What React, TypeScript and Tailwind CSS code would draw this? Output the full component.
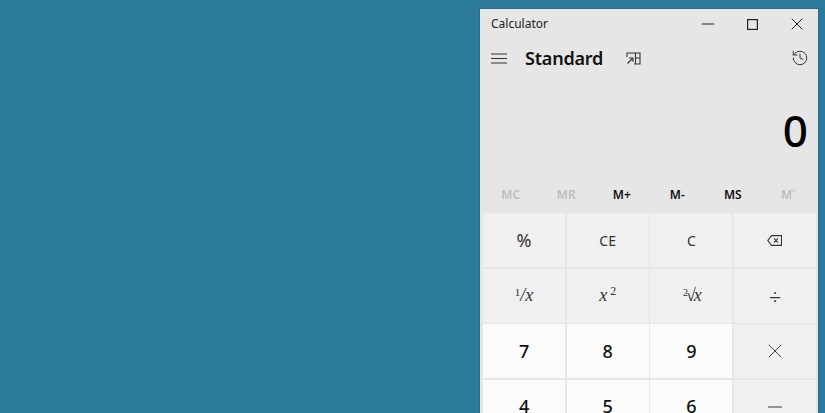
import { History, Minus, X } from "lucide-react";

const FONT = "font-['Noto_Sans','Open_Sans',sans-serif]";

function MenuIcon() {
  return (
    <svg width="16" height="11" viewBox="0 0 16 11" fill="none" stroke="#333" strokeWidth="1.2">
      <path d="M0 1h16M0 5.5h16M0 10h16" />
    </svg>
  );
}

function MaximizeIcon() {
  return (
    <svg width="11" height="11" viewBox="0 0 11 11" fill="none" stroke="#222" strokeWidth="1.2">
      <rect x="0.6" y="0.6" width="9.8" height="9.8" />
    </svg>
  );
}

function KeepOnTopIcon() {
  return (
    <svg width="15" height="13" viewBox="0 0 15 13" fill="none" stroke="#333" strokeWidth="1.1">
      <path d="M1 5V1h13v11H8" />
      <path d="M9.5 1v11M9.5 6H14" />
      <path d="M1.5 11.5 6.5 6.5M3 6h4v4" />
    </svg>
  );
}

function BackspaceIcon() {
  return (
    <svg width="15" height="11" viewBox="0 0 15 11" fill="none" stroke="#333" strokeWidth="1.1">
      <path d="M4.5.6h10v9.8h-10L.8 5.5z" />
      <path d="M7 3.4 11 7.6M11 3.4 7 7.6" />
    </svg>
  );
}

function Key({ children, light }: { children: React.ReactNode; light?: boolean }) {
  return (
    <div className={`flex h-[54px] items-center justify-center ${light ? "bg-[#fbfbfb]" : "bg-[#f0f0f0]"}`}>
      {children}
    </div>
  );
}

function Digit({ value }: { value: string }) {
  return (
    <Key light>
      <span className="text-[18px] font-medium text-[#111]">{value}</span>
    </Key>
  );
}

function MathText({ children }: { children: React.ReactNode }) {
  return <span className="font-['Liberation_Serif',serif] text-[18px] italic text-[#333]">{children}</span>;
}

const memory = [
  { label: "MC", on: false },
  { label: "MR", on: false },
  { label: "M+", on: true },
  { label: "M-", on: true },
  { label: "MS", on: true },
  { label: "M˅", on: false },
];

export default function App() {
  return (
    <div className={`flex h-[413px] w-[825px] items-start justify-end overflow-hidden bg-[#2d7b9b] pr-[6px] pt-[8px] ${FONT}`}>
      <div className="flex w-[340px] flex-none flex-col border border-[#2a6a85] bg-[#e6e6e6]">
        <div className="flex h-[30px] items-center justify-between pl-[11px] pr-[11px]">
          <span className="text-[12px] text-[#222]">Calculator</span>
          <div className="flex items-center">
            <Minus size={20} strokeWidth={1.3} className="text-[#222]" />
            <div className="ml-[29px] mr-[29px]">
              <MaximizeIcon />
            </div>
            <X size={20} strokeWidth={1.2} className="text-[#222]" />
          </div>
        </div>
        <div className="flex h-[38px] items-center pl-[11px] pr-[9px]">
          <MenuIcon />
          <span className="ml-[18px] pt-[1px] text-[18px] font-semibold tracking-[-0.2px] text-[#111]">Standard</span>
          <div className="ml-[23px]">
            <KeepOnTopIcon />
          </div>
          <History size={18} strokeWidth={1.3} className="ml-auto text-[#333]" />
        </div>
        <div className="flex h-[101px] items-center justify-end pr-[10px] pt-[5px]">
          <span className="text-[44px] font-medium leading-none text-black">0</span>
        </div>
        <div className="grid h-[34px] grid-cols-6 items-center pl-[3px] pr-[2px] text-[12px] font-semibold">
          {memory.map((m) => (
            <span key={m.label} className={`text-center ${m.on ? "text-[#111]" : "text-[#bdbdbd]"}`}>
              {m.label}
            </span>
          ))}
        </div>
        <div className="grid grid-cols-4 gap-[1.5px] pl-[3px] pr-[2px] pt-[1px]">
          <Key><span className="text-[18px] text-[#333]">%</span></Key>
          <Key><span className="text-[14px] text-[#333]">CE</span></Key>
          <Key><span className="text-[14px] text-[#333]">C</span></Key>
          <Key><BackspaceIcon /></Key>
          <Key><MathText><sup className="text-[11px] not-italic">1</sup>/x</MathText></Key>
          <Key><MathText>x<sup className="ml-[3px] text-[12px] not-italic">2</sup></MathText></Key>
          <Key><span className="font-['Liberation_Serif',serif] text-[18px] italic tracking-[-2px] text-[#333]"><sup className="text-[10px] not-italic">2</sup>√x</span></Key>
          <Key><span className="text-[22px] font-light leading-none text-[#333]">÷</span></Key>
          <Digit value="7" />
          <Digit value="8" />
          <Digit value="9" />
          <Key><X size={24} strokeWidth={0.9} className="text-[#333]" /></Key>
          <Digit value="4" />
          <Digit value="5" />
          <Digit value="6" />
          <Key><Minus size={22} strokeWidth={1.3} className="text-[#333]" /></Key>
        </div>
      </div>
    </div>
  );
}
